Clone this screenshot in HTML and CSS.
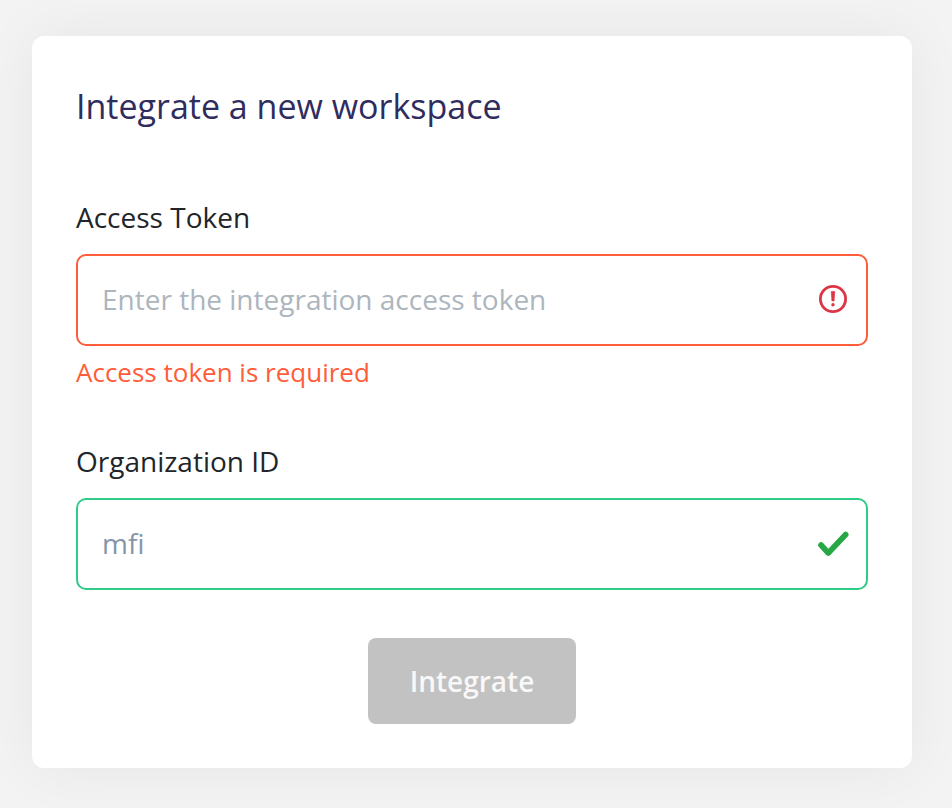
FILE: index.html
```html
<!DOCTYPE html>
<html lang="en">
<head>
    <meta charset="UTF-8">
    <meta name="viewport" content="width=device-width, initial-scale=1.0">
    <title>Integrate a new workspace</title>
    <link rel="stylesheet" href="styles.css">
</head>
<body>

<div class="card">
    <h1>Integrate a new workspace</h1>

    <form class="form">
        <div class="field">
            <label for="token">Access Token</label>
            <div class="input-box invalid">
                <input id="token" type="text" placeholder="Enter the integration access token">
                <svg class="icon" width="32" height="32" viewBox="0 1 32 32">
                    <circle cx="16" cy="16" r="12.6" fill="none" stroke="#dc3545" stroke-width="2.8"/>
                    <path d="M14.2 8.4h3.6l-.7 9.6h-2.2z" fill="#dc3545" stroke="#dc3545" stroke-width=".6" stroke-linejoin="round"/>
                    <circle cx="16" cy="21.7" r="1.7" fill="#dc3545"/>
                </svg>
            </div>
            <div class="error">Access token is required</div>
        </div>

        <div class="field">
            <label for="org">Organization ID</label>
            <div class="input-box valid">
                <input id="org" type="text" value="mfi">
                <svg class="icon" width="32" height="32" viewBox="0 0 32 32">
                    <path d="M4 17l7.3 8L28.7 6.5" fill="none" stroke="#28a745" stroke-width="5.6" stroke-linecap="round" stroke-linejoin="round"/>
                </svg>
            </div>
        </div>

        <div class="actions">
            <button class="btn" type="button" disabled>Integrate</button>
        </div>
    </form>
</div>

</body>
</html>
```

FILE: styles.css
```css
* {
    box-sizing: border-box;
}

body {
    font-family: "Open Sans", sans-serif;
    background-color: #f3f3f3;
    margin: 0;
    padding: 36px 40px 40px 32px;
    min-height: 808px;
}

.card {
    width: 880px;
    height: 732px;
    padding: 44px;
    background-color: #fff;
    border-radius: 12px;
    box-shadow: 0 0 60px rgba(0, 0, 10, 0.06);
}

h1 {
    margin: 0 0 67px;
    font-size: 34px;
    line-height: 52px;
    font-weight: 400;
    color: #2f2c5e;
}

.field + .field {
    margin-top: 53px;
}

label {
    display: block;
    margin-bottom: 19px;
    font-size: 28px;
    line-height: 36px;
    color: #212529;
}

.input-box {
    display: flex;
    align-items: center;
    height: 92px;
    padding: 0 17px 0 24px;
    border: 2px solid #ced4da;
    border-radius: 10px;
    background-color: #fff;
}

.input-box.invalid {
    border-color: #ff5c39;
}

.input-box.valid {
    border-color: #2ecc87;
}

.input-box input {
    flex: 1;
    min-width: 0;
    border: none;
    outline: none;
    padding: 0 0 2px;
    font-family: inherit;
    font-size: 28px;
    color: #8496a8;
}

.input-box input::placeholder {
    color: #adb5bd;
    opacity: 1;
}

.error {
    margin-top: 8px;
    font-size: 26px;
    line-height: 36px;
    color: #ff5c39;
}

.actions {
    display: flex;
    justify-content: center;
    margin-top: 48px;
}

.btn {
    width: 208px;
    height: 86px;
    border: none;
    border-radius: 8px;
    background-color: #c2c2c2;
    color: #f8f8f8;
    font-family: inherit;
    font-size: 28px;
    font-weight: 600;
}
```
